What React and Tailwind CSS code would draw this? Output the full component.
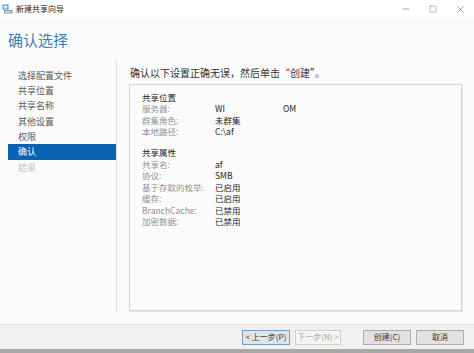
import { Minus, Square, X } from 'lucide-react'

const nav = ['选择配置文件', '共享位置', '共享名称', '其他设置', '权限', '确认', '结果']

const location = [
  ['服务器:', null],
  ['群集角色:', '未群集'],
  ['本地路径:', 'C:\\af'],
]

const props = [
  ['共享名:', 'af'],
  ['协议:', 'SMB'],
  ['基于存取的枚举:', '已启用'],
  ['缓存:', '已启用'],
  ['BranchCache:', '已禁用'],
  ['加密数据:', '已禁用'],
]

function AppIcon() {
  return (
    <svg width="11" height="10" viewBox="0 0 11 10">
      <rect x="0.5" y="0.5" width="6" height="5" fill="#3d8fd6" />
      <rect x="1.5" y="1.5" width="4" height="3" fill="#cfe6fa" />
      <rect x="2" y="6" width="8.5" height="3.5" fill="#8c9aa6" />
      <rect x="3" y="7" width="6" height="1.5" fill="#d6dde3" />
    </svg>
  )
}

function Row({ label, value }) {
  return (
    <div className="flex h-[11.5px] items-center">
      <span className="w-[73px] text-[#939393]">{label}</span>
      <span className="text-[#262626]">{value}</span>
    </div>
  )
}

function Btn({ children, disabled, focused, className = '' }) {
  return (
    <div
      className={
        'h-[15px] flex items-center justify-center border text-[8px] ' +
        (disabled
          ? 'border-[#cfcfcf] bg-[#f4f4f4] text-[#a8a8a8] '
          : focused
          ? 'border-[#7a9cc4] bg-[#e3e3e3] text-[#333] '
          : 'border-[#adadad] bg-[#e1e1e1] text-[#333] ') +
        className
      }
    >
      {children}
    </div>
  )
}

export default function App() {
  return (
    <div
      className="w-[474px] h-[353px] flex flex-col bg-[#fbfbfb] overflow-hidden"
      style={{ fontFamily: '"Noto Sans CJK SC", "Noto Sans", sans-serif' }}
    >
      <div className="h-[18px] bg-white flex items-center shrink-0">
        <div className="pl-[2px] pr-[3px] flex items-center">
          <AppIcon />
        </div>
        <span className="text-[8px] text-[#222]">新建共享向导</span>
        <div className="ml-auto flex items-center text-[#333]">
          <div className="w-[27px] flex justify-center"><Minus size={10} strokeWidth={1} /></div>
          <div className="w-[27px] flex justify-center"><Square size={8} strokeWidth={1} /></div>
          <div className="w-[28px] flex justify-center"><X size={11} strokeWidth={1} /></div>
        </div>
      </div>

      <div className="h-[42px] flex items-center pl-[8px] shrink-0">
        <span className="text-[15px] text-[#3a7fb3] leading-none">确认选择</span>
      </div>

      <div className="flex-1 flex min-h-0">
        <div className="w-[117px] shrink-0 border-r border-[#dcdcdc] pt-[8px] pl-[8px] mb-[12px] text-[9px]">
          {nav.map((n, i) => (
            <div
              key={n}
              className={
                'h-[15.3px] flex items-center pl-[10px] ' +
                (i === 5 ? 'bg-[#0b62b0] text-white' : i === 6 ? 'text-[#c4c4c4]' : 'text-[#5a5a5a]')
              }
            >
              {n}
            </div>
          ))}
        </div>

        <div className="flex-1 flex flex-col pl-[12px] pr-[12px] pb-[13px]">
          <div className="h-[24px] flex items-center pl-[1px] text-[10px] text-[#333]">
            确认以下设置正确无误，然后单击“创建”。
          </div>
          <div className="flex-1 border border-[#d6d6d6] shadow-[1px_1px_0_#e6e6e6] bg-[#fbfbfb] pl-[12px] pt-[6px] text-[8.5px]">
            <div className="h-[12px] flex items-center text-[#1e1e1e]">共享位置</div>
            <div className="flex h-[11.5px] items-center">
              <span className="w-[73px] text-[#939393]">服务器:</span>
              <span className="text-[#262626]">WI</span>
              <span className="w-[58px]" />
              <span className="text-[#262626]">OM</span>
            </div>
            {location.slice(1).map(([l, v]) => (
              <Row key={l} label={l} value={v} />
            ))}
            <div className="h-[12px] mt-[9px] flex items-center text-[#1e1e1e]">共享属性</div>
            {props.map(([l, v]) => (
              <Row key={l} label={l} value={v} />
            ))}
          </div>
        </div>
      </div>

      <div className="h-[25px] shrink-0 border-t border-[#e2e2e2] bg-[#f0f0f0] flex items-center pl-[242px]">
        <Btn focused className="w-[48px]">&lt; 上一步(P)</Btn>
        <Btn disabled className="w-[46px] ml-[5px]">下一步(N) &gt;</Btn>
        <Btn className="w-[48px] ml-[22px]">创建(C)</Btn>
        <Btn className="w-[48px] ml-[5px]">取消</Btn>
      </div>
      <div className="h-[4px] shrink-0 bg-[#a9a9a9]" />
    </div>
  )
}
